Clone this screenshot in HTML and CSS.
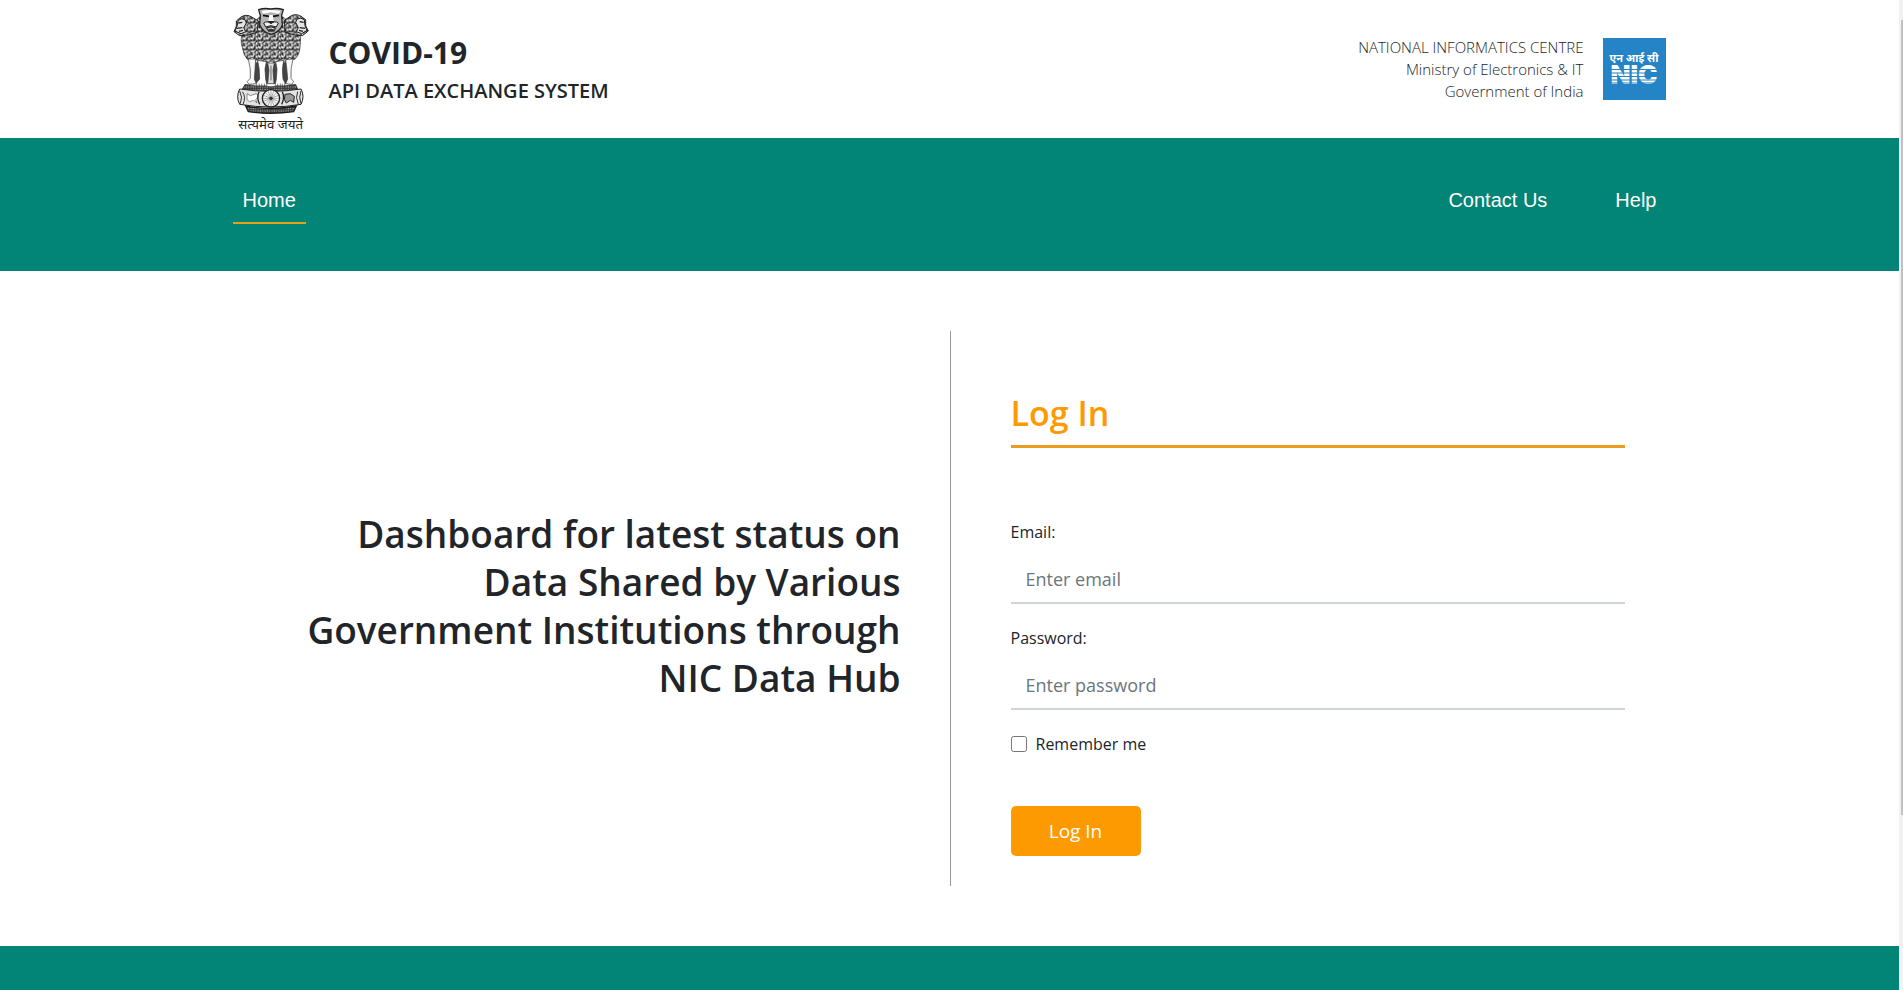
FILE: index.html
```
<!DOCTYPE html>
<html lang="en">
<head>
    <meta charset="UTF-8">
    <meta name="viewport" content="width=device-width, initial-scale=1.0">
    <title>COVID-19 API Data Exchange System</title>
    <link rel="stylesheet" href="styles.css">
</head>
<body>
    <div class="page">
        <header class="header">
            <div class="container header-row">
                <div class="brand">
                    <svg class="emblem" viewBox="40 20 228 384" role="img" aria-label="State Emblem of India">
                        <defs>
                            <pattern id="fur" width="23" height="27" patternUnits="userSpaceOnUse">
                                <rect width="23" height="27" fill="#777"/>
                                <path d="M1 3l5 6M12 1l-4 7M17 5l4 5M3 15l5 5M15 14l-5 6M20 18l-3 7M8 24l4 3" stroke="#fff" stroke-width="4"/>
                                <path d="M6 1l-4 -1M14 3l-3 8M22 3l-2 -3M0 11l6 3M9 12l6 0M18 12l3 5M13 21l4 -3M2 22l4 4" stroke="#1c1c1c" stroke-width="4"/>
                            </pattern>
                            <pattern id="beads" width="7" height="8" patternUnits="userSpaceOnUse">
                                <rect width="7" height="8" fill="#3a3a3a"/>
                                <circle cx="3" cy="4" r="2" fill="#bbb"/>
                            </pattern>
                        </defs>
                        <!-- manes -->
                        <path d="M70 88Q60 120 68 142Q72 166 84 178L100 170L110 188L124 178L140 190L154 182L168 190L184 178L198 188L208 172L224 178Q240 164 241 140Q246 116 238 86L205 62L190 50L120 50L104 64Z" fill="url(#fur)" stroke="#333" stroke-width="2"/>
                        <!-- side lions -->
                        <path d="M64 50Q80 40 96 50L116 62L112 96L84 104L60 106L43 94L50 78L50 62Z" fill="url(#fur)" stroke="#222" stroke-width="3"/>
                        <path d="M244 48Q228 38 212 48L194 60L196 96L226 104L248 106L266 92L258 76L258 58Z" fill="url(#fur)" stroke="#222" stroke-width="3"/>
                        <path d="M56 60Q66 52 76 58L80 68L72 82L78 94L64 100L46 92L52 78Z" fill="#e2e2e2" stroke="#222" stroke-width="3"/>
                        <path d="M254 58Q244 50 232 56L228 66L236 82L230 94L246 100L262 90L256 76Z" fill="#e2e2e2" stroke="#222" stroke-width="3"/>
                        <path d="M56 68L68 66M52 84L68 82M58 93L70 90M252 66L240 64M256 84L240 82M250 93L238 90" fill="none" stroke="#222" stroke-width="4"/>
                        <!-- middle lion -->
                        <path d="M117 28Q134 22 153 26Q174 22 191 28L186 44L188 74Q180 96 154 102Q130 96 120 74L122 46Z" fill="#b4b4b4" stroke="#222" stroke-width="4"/>
                        <path d="M126 32Q152 26 182 32L178 40L154 36L130 40Z" fill="#fff"/>
                        <path d="M130 45L148 48M178 45L160 48" stroke="#111" stroke-width="5"/>
                        <path d="M149 44L146 62L162 62L159 44Z" fill="#fff"/>
                        <path d="M142 62L166 62L154 70Z" fill="#222"/>
                        <path d="M132 68Q142 60 154 70Q166 60 176 68L170 80Q154 72 138 80Z" fill="#eee" stroke="#222" stroke-width="3"/>
                        <path d="M138 82Q154 74 170 82L164 94L146 94Z" fill="#333"/>
                        <path d="M144 86Q154 80 164 86" fill="none" stroke="#eee" stroke-width="3"/>
                        <!-- legs -->
                        <path d="M92 184L110 188L124 182L140 190L168 190L184 182L198 188L214 184L210 250L94 250Z" fill="#444"/>
                        <path d="M86 176L108 176Q106 210 104 236L110 250L88 252L82 244L92 234Q94 204 86 176Z" fill="#f8f8f8" stroke="#333" stroke-width="2"/>
                        <path d="M114 180L140 184L136 206L138 236L142 256L112 258L110 248L120 236Q120 204 114 180Z" fill="#fff" stroke="#333" stroke-width="2"/>
                        <path d="M144 188L164 188L160 210L163 250L144 250L148 210Z" fill="#ddd" stroke="#333" stroke-width="2"/>
                        <path d="M168 184L192 180Q186 204 190 236L196 248L194 258L166 256L170 236L172 206Z" fill="#fff" stroke="#333" stroke-width="2"/>
                        <path d="M198 178L220 176Q212 204 214 234L222 244L216 252L198 250L204 236Q202 208 198 178Z" fill="#f8f8f8" stroke="#333" stroke-width="2"/>
                        <path d="M118 250L120 258M126 250L127 258M134 250L135 258M174 250L174 258M182 250L182 258M188 250L188 258M154 196V240" stroke="#333" stroke-width="2"/>
                        <!-- abacus -->
                        <path d="M76 252Q154 266 228 252L234 266Q154 276 68 266Z" fill="url(#beads)" stroke="#222" stroke-width="2"/>
                        <path d="M60 266Q154 280 244 266Q256 288 244 312Q154 328 60 312Q48 290 60 266Z" fill="#e4e4e4" stroke="#222" stroke-width="3"/>
                        <path d="M60 272Q70 290 62 310M68 274Q80 290 70 312M244 272Q236 290 244 310M234 274Q226 290 236 312" fill="none" stroke="#333" stroke-width="3"/>
                        <path d="M82 280L92 286L110 280L116 288L108 298L112 308L102 300L90 304L82 298Z" fill="#fff" stroke="#555" stroke-width="2"/>
                        <path d="M196 282L212 280L224 288L222 306L212 300L200 308L194 298Z" fill="#999" stroke="#222" stroke-width="3"/>
                        <path d="M118 274Q110 292 120 312M188 274Q196 292 186 312" fill="none" stroke="#222" stroke-width="4"/>
                        <circle cx="154" cy="294" r="26" fill="#fafafa" stroke="#222" stroke-width="4"/>
                        <path d="M154 270V318M130 294H178M137 277L171 311M171 277L137 311M145 272L163 316M163 272L145 316M132 285L176 303M176 285L132 303" stroke="#555" stroke-width="1.5"/>
                        <circle cx="154" cy="294" r="5" fill="#333"/>
                        <path d="M78 317Q154 332 230 317L222 334Q154 344 86 334Z" fill="url(#beads)" stroke="#1b1b1b" stroke-width="4"/>
                        <text class="emblem-text" x="153" y="386" text-anchor="middle">सत्यमेव जयते</text>
                    </svg>
                    <div class="brand-text">
                        <h1>COVID-19</h1>
                        <h2>API DATA EXCHANGE SYSTEM</h2>
                    </div>
                </div>
                <div class="org">
                    <p>
                        NATIONAL INFORMATICS CENTRE<br>
                        Ministry of Electronics &amp; IT<br>
                        Government of India
                    </p>
                    <svg class="nic-logo" viewBox="0 0 63 62" role="img" aria-label="NIC">
                        <rect width="63" height="62" fill="#2484c6"/>
                        <text class="nic-hindi" x="31" y="24" text-anchor="middle">एन आई सी</text>
                        <text class="nic-name" x="31" y="46" text-anchor="middle">NIC</text>
                        <path d="M8 31.5H55M8 35H55M8 38.500H55M8 42H55M8 45H55" stroke="#2484c6"/>
                    </svg>
                </div>
            </div>
        </header>

        <nav class="navbar">
            <div class="container nav-row">
                <a class="nav-link active" href="#">Home</a>
                <div class="nav-right">
                    <a class="nav-link" href="#">Contact Us</a>
                    <a class="nav-link" href="#">Help</a>
                </div>
            </div>
        </nav>

        <main class="container main">
            <section class="intro">
                <h2>Dashboard for latest status on Data Shared by Various Government Institutions through NIC Data Hub</h2>
            </section>
            <section class="login">
                <h2>Log In</h2>
                <form action="#">
                    <div class="form-group">
                        <label for="email">Email:</label>
                        <input type="email" id="email" class="form-control" placeholder="Enter email">
                    </div>
                    <div class="form-group">
                        <label for="pwd">Password:</label>
                        <input type="password" id="pwd" class="form-control" placeholder="Enter password">
                    </div>
                    <div class="form-check">
                        <input type="checkbox" id="remember">
                        <label for="remember">Remember me</label>
                    </div>
                    <button type="submit" class="btn">Log In</button>
                </form>
            </section>
        </main>

        <footer class="footer"></footer>
    </div>
    <div class="scroll-track"><div class="scroll-thumb"></div></div>
</body>
</html>
```
FILE: styles.css
```
* {
    margin: 0;
    padding: 0;
    box-sizing: border-box;
}

body {
    display: flex;
    height: 100vh;
    overflow: hidden;
    font-family: 'Segoe UI', 'Open Sans', 'Noto Sans', sans-serif;
    color: #212529;
    background: #fff;
}

.page {
    flex: 1;
    display: flex;
    flex-direction: column;
}

.container {
    width: 100%;
    max-width: 1464px;
    margin: 0 auto;
    padding: 0 15px;
}

/* Header */
.header-row {
    display: flex;
    justify-content: space-between;
    align-items: center;
    padding-top: 7px;
    padding-bottom: 3px;
}

.brand {
    display: flex;
    align-items: center;
    gap: 20px;
}

.emblem {
    width: 76px;
    height: 128px;
}

.emblem-text {
    font-family: 'Noto Sans Devanagari', 'Noto Sans', sans-serif;
    font-size: 40px;
    fill: #222;
}

.brand-text h1 {
    font-size: 30px;
    line-height: 40px;
    font-weight: 700;
}

.brand-text h2 {
    font-size: 20px;
    line-height: 36px;
    font-weight: 600;
}

.org {
    display: flex;
    align-items: center;
    gap: 19px;
    padding: 0 1px 4px 0;
}

.org p {
    font-size: 15px;
    line-height: 22px;
    font-weight: 300;
    text-align: right;
}

.nic-logo {
    width: 63px;
    height: 62px;
}

.nic-hindi {
    font-family: 'Noto Sans Devanagari', 'Noto Sans', sans-serif;
    font-size: 11px;
    font-weight: 700;
    fill: #fff;
}

.nic-name {
    font-family: Inter, sans-serif;
    font-size: 26px;
    font-weight: 900;
    fill: #fff;
}

/* Navigation */
.navbar {
    background: #028476;
    padding: 40px 0 47px;
}

.nav-row,
.nav-right {
    display: flex;
}

.nav-row {
    justify-content: space-between;
}

.nav-right {
    gap: 48px;
}

.nav-link {
    font-family: Arial, 'Liberation Sans', sans-serif;
    font-size: 20px;
    line-height: 24px;
    color: #fff;
    text-decoration: none;
    padding: 10px;
    border-bottom: 2px solid transparent;
}

.nav-link.active {
    border-color: #e6a11a;
}

/* Main */
.main {
    display: grid;
    grid-template-columns: 1fr 1fr;
    padding-top: 60px;
    padding-bottom: 60px;
}

.intro {
    display: flex;
    align-items: center;
    justify-content: flex-end;
    padding: 0 49px 6px;
}

.intro h2 {
    max-width: 620px;
    font-size: 37px;
    line-height: 48px;
    font-weight: 600;
    text-align: right;
}

.login {
    padding: 60px 42px 30px 60px;
    border-left: 1px solid #999;
}

.login h2 {
    font-size: 34px;
    line-height: 44px;
    font-weight: 600;
    color: #fe9a01;
    padding-bottom: 10px;
    border-bottom: 3px solid #ec9b20;
    margin-bottom: 72px;
}

.form-group {
    margin-bottom: 22px;
}

.form-group label {
    display: block;
    font-size: 16px;
    line-height: 24px;
    margin-bottom: 12px;
}

.form-control {
    display: block;
    width: 100%;
    height: 48px;
    padding: 0 15px;
    border: none;
    border-bottom: 2px solid #d0d4d7;
    font-family: inherit;
    font-size: 18px;
    color: #495057;
}

.form-control::placeholder {
    color: #6c757d;
}

.form-check {
    display: flex;
    align-items: center;
    gap: 9px;
    margin-bottom: 50px;
}

.form-check input {
    width: 16px;
    height: 16px;
}

.form-check label {
    font-size: 16px;
    line-height: 24px;
}

.btn {
    width: 130px;
    height: 50px;
    border: none;
    border-radius: 5px;
    background: #fe9a01;
    color: #fff;
    font-family: inherit;
    font-size: 19px;
    cursor: pointer;
}

.footer {
    flex: 1;
    background: #028476;
}

/* Scrollbar strip */
.scroll-track {
    width: 4px;
    padding: 20px 0 0 2px;
    background: #f1f1f1;
}

.scroll-thumb {
    height: 82%;
    background: #c1c1c1;
}
```
